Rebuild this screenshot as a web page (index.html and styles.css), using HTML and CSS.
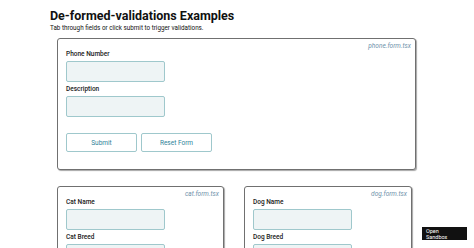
FILE: index.html
```html
<!DOCTYPE html>
<html lang="en">
<head>
    <meta charset="UTF-8">
    <meta name="viewport" content="width=device-width, initial-scale=1.0">
    <title>De-formed-validations Examples</title>
    <link rel="stylesheet" href="styles.css">
</head>
<body>
    <div class="page">
        <h1 class="title">De-formed-validations Examples</h1>
        <p class="subtitle">Tab through fields or click submit to trigger validations.</p>

        <div class="examples">
            <form class="card card-wide">
                <span class="file-name">phone.form.tsx</span>
                <label class="field-label" for="phone">Phone Number</label>
                <input class="field-input" type="text" id="phone" name="phone">
                <label class="field-label" for="description">Description</label>
                <input class="field-input" type="text" id="description" name="description">
                <div class="actions">
                    <button class="btn" type="submit">Submit</button>
                    <button class="btn" type="reset">Reset Form</button>
                </div>
            </form>

            <div class="row">
                <form class="card card-cat">
                    <span class="file-name">cat.form.tsx</span>
                    <label class="field-label" for="catName">Cat Name</label>
                    <input class="field-input" type="text" id="catName" name="catName">
                    <label class="field-label" for="catBreed">Cat Breed</label>
                    <input class="field-input" type="text" id="catBreed" name="catBreed">
                </form>
                <form class="card card-dog">
                    <span class="file-name">dog.form.tsx</span>
                    <label class="field-label" for="dogName">Dog Name</label>
                    <input class="field-input" type="text" id="dogName" name="dogName">
                    <label class="field-label" for="dogBreed">Dog Breed</label>
                    <input class="field-input" type="text" id="dogBreed" name="dogBreed">
                </form>
            </div>
        </div>
    </div>

    <a class="sandbox-link" href="#">Open<br>Sandbox</a>
</body>
</html>
```

FILE: styles.css
```css
* {
    box-sizing: border-box;
}

html,
body {
    height: 248px;
    overflow: hidden;
}

body {
    margin: 0;
    background-color: #fff;
    color: #111;
    font-family: Roboto, "Liberation Sans", sans-serif;
}

.page {
    padding: 7px 0 0 50px;
}

.title {
    margin: 0;
    font-size: 12.5px;
    line-height: 17px;
    font-weight: 700;
}

.subtitle {
    margin: 0;
    font-size: 6.3px;
    line-height: 8px;
}

.examples {
    padding: 6px 0 0 7px;
}

.card {
    position: relative;
    display: flex;
    flex-direction: column;
    align-items: flex-start;
    padding: 11px 8px 17px;
    border: 1px solid #707070;
    border-radius: 3px;
    box-shadow: 1px 1px 1px rgba(0, 0, 0, 0.35);
    background-color: #fff;
}

.card-wide {
    width: 359px;
}

.row {
    display: flex;
    gap: 20px;
    margin-top: 16px;
}

.card-cat {
    width: 167px;
}

.card-dog {
    width: 168px;
}

.file-name {
    position: absolute;
    top: 3px;
    right: 4px;
    font-size: 6.5px;
    font-style: italic;
    color: #6f92ab;
}

.field-label {
    font-family: Roboto, "Liberation Sans", sans-serif;
    font-size: 6.5px;
    line-height: 9px;
    font-weight: 500;
    color: #1a1a1a;
    margin-bottom: 2px;
}

.field-input {
    width: 99px;
    height: 21px;
    margin: 0 0 3px;
    border: 1px solid #9fc8cc;
    border-radius: 2px;
    background-color: #eef4f5;
}

.actions {
    display: flex;
    gap: 4px;
    margin-top: 13px;
}

.btn {
    width: 71px;
    height: 19px;
    padding: 0;
    border: 1px solid #9fc8cc;
    border-radius: 2px;
    background-color: #fff;
    color: #2f8399;
    font-family: Roboto, "Liberation Sans", sans-serif;
    font-size: 6.5px;
}

.sandbox-link {
    position: fixed;
    right: 7px;
    bottom: 8px;
    width: 45px;
    height: 13px;
    padding: 0.5px 4px;
    background-color: #111;
    color: #fff;
    font-size: 5.5px;
    line-height: 6px;
    text-decoration: none;
}
```
